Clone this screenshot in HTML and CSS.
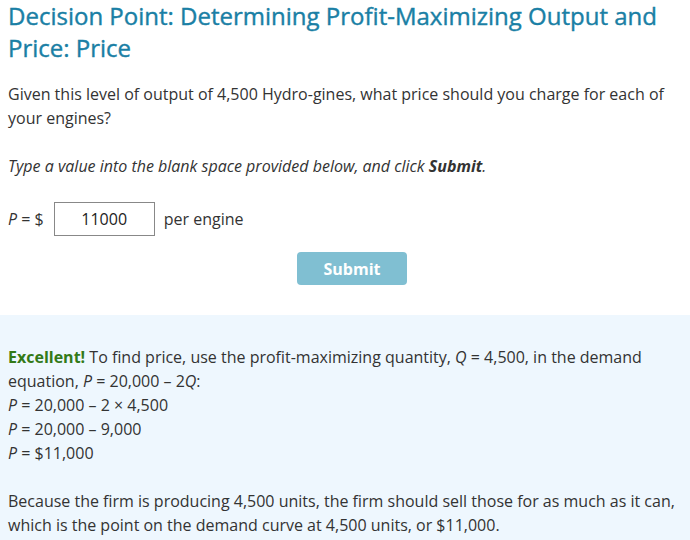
FILE: index.html
```html
<!DOCTYPE html>
<html>
<head>
<meta charset="utf-8">
<link rel="stylesheet" href="styles.css">
</head>
<body>
<div class="page">
  <h1 class="title">Decision Point: Determining Profit-Maximizing Output and Price: Price</h1>
  <p class="question">Given this level of output of 4,500 Hydro-gines, what price should you charge for each of your engines?</p>
  <p class="instr"><em>Type a value into the blank space provided below, and click <strong>Submit</strong>.</em></p>
  <div class="answer-row">
    <span class="label"><em>P</em> = $</span>
    <span class="input">11000</span>
    <span class="unit">per engine</span>
  </div>
  <div class="submit-row">
    <button class="submit">Submit</button>
  </div>
</div>
<div class="feedback">
  <p class="fb-text"><strong class="excellent">Excellent!</strong> To find price, use the profit-maximizing quantity, <em>Q</em> = 4,500, in the demand equation, <em>P</em> = 20,000 – 2<em>Q</em>:<br>
  <em>P</em> = 20,000 – 2 × 4,500<br>
  <em>P</em> = 20,000 – 9,000<br>
  <em>P</em> = $11,000</p>
  <p class="fb-text">Because the firm is producing 4,500 units, the firm should sell those for as much as it can, which is the point on the demand curve at 4,500 units, or $11,000.</p>
</div>
</body>
</html>
```
FILE: styles.css
```css
html, body {
  margin: 0;
  padding: 0;
  background: #fff;
}
body {
  font-family: "Open Sans", "Liberation Sans", sans-serif;
  font-size: 16px;
  line-height: 24px;
  color: #333;
}
.page {
  padding: 0 8px;
}
.title {
  margin: 0;
  font-size: 24px;
  line-height: 32px;
  font-weight: 400;
  color: #1a7fa5;
  -webkit-text-stroke: 0.4px #1a7fa5;
}
.question {
  margin: 18px 0 0;
}
.instr {
  margin: 24px 0 0;
}
.instr strong {
  font-weight: 700;
}
.answer-row {
  display: flex;
  align-items: center;
  margin-top: 24px;
  height: 34px;
}
.label {
  margin-right: 10px;
}
.input {
  box-sizing: border-box;
  width: 101px;
  height: 34px;
  border: 1px solid #888;
  text-align: center;
  line-height: 32px;
  color: #222;
  margin-right: 9px;
}
.submit-row {
  display: flex;
  justify-content: center;
  padding-left: 14px;
  margin-top: 16px;
}
.submit {
  width: 110px;
  height: 33px;
  border: none;
  border-radius: 4px;
  background: #80bfd2;
  color: #fff;
  font-family: "Open Sans", "Liberation Sans", sans-serif;
  font-size: 16px;
  font-weight: 700;
}
.feedback {
  margin-top: 30px;
  background: #eef7fe;
  padding: 30px 8px 10px;
}
.fb-text {
  margin: 0 0 24px;
}
.excellent {
  color: #337a18;
  font-weight: 700;
}
```
